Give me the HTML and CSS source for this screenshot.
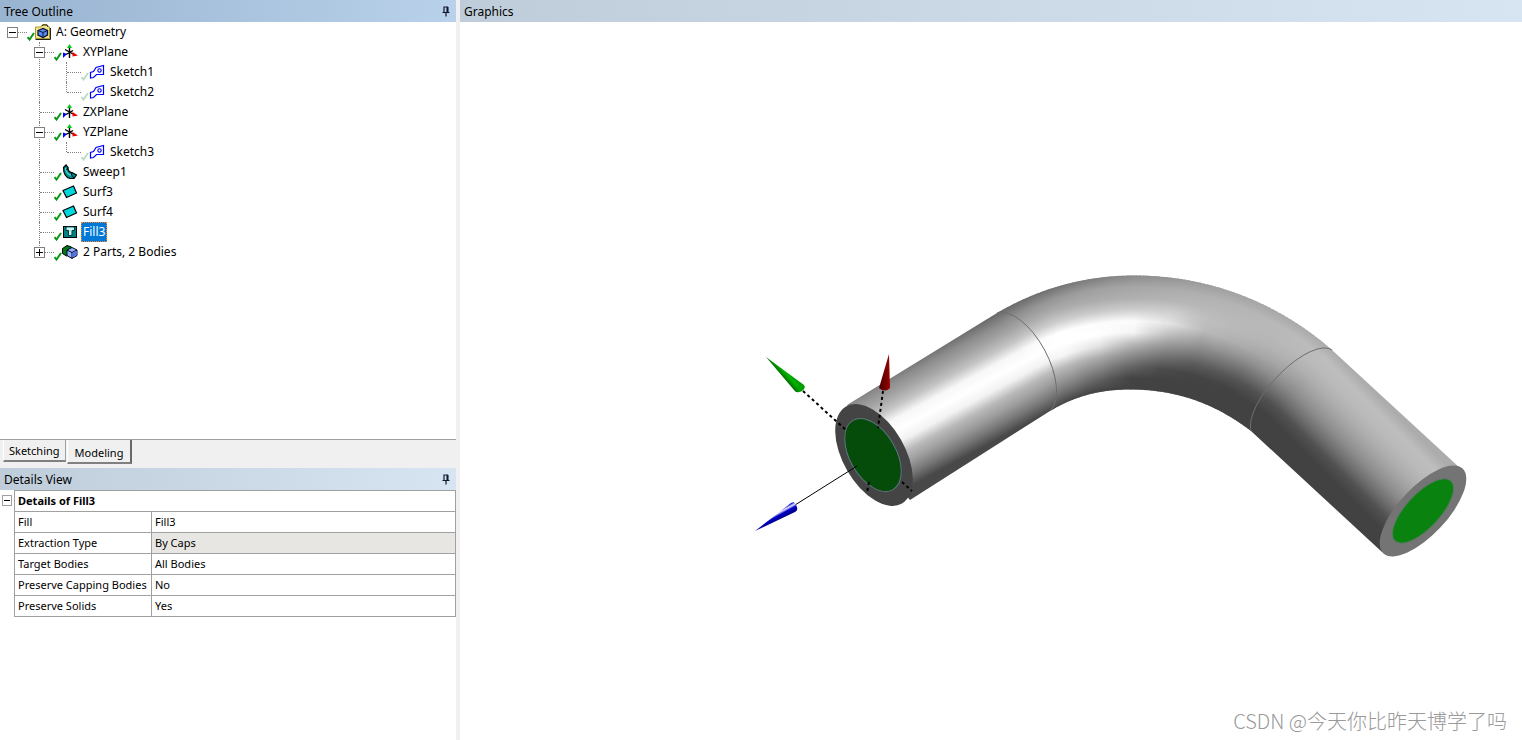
FILE: index.html
```html
<!DOCTYPE html>
<html lang="en">
<head>
    <meta charset="UTF-8">
    <meta name="viewport" content="width=device-width, initial-scale=1.0">
    <title>A: Geometry</title>
    <link rel="stylesheet" href="styles.css">
</head>
<body>
    <!-- shared icons -->
    <svg class="defs" width="0" height="0" aria-hidden="true">
        <symbol id="check" viewBox="0 0 8 9">
            <path d="M0.5 5 L2.5 7.5 L7 1" fill="none" stroke="currentColor" stroke-width="2"/>
        </symbol>
        <symbol id="plane" viewBox="0 0 16 16">
            <path d="M7.500 3 V14 M3 5.500 L11 10 M11 6.500 L4 10.500" stroke="#000" stroke-width="1.400" fill="none"/>
            <path d="M7.500 0 L10 4 H5 Z" fill="#00c814"/>
            <path d="M10.500 8 L16 11.500 L10.500 12.500 Z" fill="#f00000"/>
            <path d="M1 8.500 L5 10 L1 14 Z" fill="#0000f0"/>
        </symbol>
        <symbol id="sketch" viewBox="0 0 16 16">
            <path d="M1.500 14 V8.500 L4.500 7.500 L7 3.500 L14.500 1.500 V10.500 L7.500 10.500 L4.500 13.500 Z" fill="#fff" stroke="#0000f0" stroke-width="1.200"/>
            <circle cx="10.500" cy="6.500" r="1.700" fill="none" stroke="#0000f0" stroke-width="1.100"/>
        </symbol>
        <symbol id="surf" viewBox="0 0 16 16">
            <path d="M1 6.500 L11.500 2 L14.500 9 L4.500 13.500 Z" fill="#00d7dc" stroke="#000" stroke-width="1.200"/>
        </symbol>
        <symbol id="pin" viewBox="0 0 8 11">
            <path d="M2 6 V1 H5.500 V6 M0.500 6.500 H7.500 M4 7 V10.500" fill="none" stroke="#101830" stroke-width="1.200"/>
            <path d="M5.500 1 V6" stroke="#101830" stroke-width="2"/>
        </symbol>
    </svg>

    <div class="app">
        <aside class="sidebar">
            <section class="outline">
                <header class="bar bar-active">
                    <h2>Tree Outline</h2>
                    <button class="pin" aria-label="Pin tree outline"><svg><use href="#pin"/></svg></button>
                </header>
                <ul class="tree">
                    <li>
                        <div class="row">
                            <span class="slot"><button class="toggle open" aria-label="Collapse Geometry"></button></span>
                            <svg class="check"><use href="#check"/></svg>
                            <svg class="icon" viewBox="0 0 16 16">
                                <path d="M0.500 14.500 V3 H6 L7.500 0.500 H12 L13.500 3 H14.500 V14.500 Z" fill="#f5e68c" stroke="#a89a28"/>
                                <path d="M7 2 L8 1 H12 L13 3" fill="none" stroke="#222"/>
                                <path d="M0.500 15.500 H15.500 V4" fill="none" stroke="#222"/>
                                <path d="M3 6.500 L8 4.500 L12.500 6.500 V11 L8 13.500 L3 11 Z" fill="#5a8cf0" stroke="#0a1440" stroke-width="1.300"/>
                                <path d="M3 6.500 L8 8.500 L12.500 6.500 M8 8.500 V13" fill="none" stroke="#0a1440"/>
                            </svg>
                            <span class="name">A: Geometry</span>
                        </div>
                        <ul>
                            <li>
                                <div class="row">
                                    <span class="slot"><button class="toggle open" aria-label="Collapse XYPlane"></button></span>
                                    <svg class="check"><use href="#check"/></svg>
                                    <svg class="icon"><use href="#plane"/></svg>
                                    <span class="name">XYPlane</span>
                                </div>
                                <ul>
                                    <li>
                                        <div class="row">
                                            <span class="slot"></span>
                                            <svg class="check faded"><use href="#check"/></svg>
                                            <svg class="icon"><use href="#sketch"/></svg>
                                            <span class="name">Sketch1</span>
                                        </div>
                                    </li>
                                    <li>
                                        <div class="row">
                                            <span class="slot"></span>
                                            <svg class="check faded"><use href="#check"/></svg>
                                            <svg class="icon"><use href="#sketch"/></svg>
                                            <span class="name">Sketch2</span>
                                        </div>
                                    </li>
                                </ul>
                            </li>
                            <li>
                                <div class="row">
                                    <span class="slot"></span>
                                    <svg class="check"><use href="#check"/></svg>
                                    <svg class="icon"><use href="#plane"/></svg>
                                    <span class="name">ZXPlane</span>
                                </div>
                            </li>
                            <li>
                                <div class="row">
                                    <span class="slot"><button class="toggle open" aria-label="Collapse YZPlane"></button></span>
                                    <svg class="check"><use href="#check"/></svg>
                                    <svg class="icon"><use href="#plane"/></svg>
                                    <span class="name">YZPlane</span>
                                </div>
                                <ul>
                                    <li>
                                        <div class="row">
                                            <span class="slot"></span>
                                            <svg class="check faded"><use href="#check"/></svg>
                                            <svg class="icon"><use href="#sketch"/></svg>
                                            <span class="name">Sketch3</span>
                                        </div>
                                    </li>
                                </ul>
                            </li>
                            <li>
                                <div class="row">
                                    <span class="slot"></span>
                                    <svg class="check"><use href="#check"/></svg>
                                    <svg class="icon" viewBox="0 0 16 16">
                                        <path d="M1.500 3.500 L4 1 L6 3.500 Q6 8.500 10 8.500 L14.500 11 L12 14.500 H8 Q1.500 13 1.500 3.500 Z" fill="#008c8c" stroke="#000" stroke-width="1.200"/>
                                        <path d="M3.500 4 Q4 10 9.500 11.500" fill="none" stroke="#5adcdc" stroke-width="1.200"/>
                                        <path d="M6 3.500 L4.500 6 M10 8.500 L9.500 11 L12 14" fill="none" stroke="#000"/>
                                    </svg>
                                    <span class="name">Sweep1</span>
                                </div>
                            </li>
                            <li>
                                <div class="row">
                                    <span class="slot"></span>
                                    <svg class="check"><use href="#check"/></svg>
                                    <svg class="icon"><use href="#surf"/></svg>
                                    <span class="name">Surf3</span>
                                </div>
                            </li>
                            <li>
                                <div class="row">
                                    <span class="slot"></span>
                                    <svg class="check"><use href="#check"/></svg>
                                    <svg class="icon"><use href="#surf"/></svg>
                                    <span class="name">Surf4</span>
                                </div>
                            </li>
                            <li>
                                <div class="row">
                                    <span class="slot"></span>
                                    <svg class="check"><use href="#check"/></svg>
                                    <svg class="icon" viewBox="0 0 16 16">
                                        <rect x="1.500" y="2.500" width="13" height="11" fill="#008080" stroke="#000"/>
                                        <path d="M4 3 H12.500 V6.500 H10 V11.500 H6.500 V6.500 H4 Z" fill="#b4f0f0" stroke="#003c3c"/>
                                        <path d="M5.500 4 H11.500 M7 5.500 H10 M8 8 V11" stroke="#fff" stroke-dasharray="1 1"/>
                                    </svg>
                                    <span class="name selected">Fill3</span>
                                </div>
                            </li>
                            <li>
                                <div class="row">
                                    <span class="slot"><button class="toggle" aria-label="Expand parts"></button></span>
                                    <svg class="check"><use href="#check"/></svg>
                                    <svg class="icon" viewBox="0 0 16 16">
                                        <path d="M0.500 4.500 L5 1.500 L9.500 3 V10 L4.500 12 L0.500 9.500 Z" fill="#007814" stroke="#000"/>
                                        <path d="M5 6 L10 3.500 L15 6 V11.500 L10 14.500 L5 11.500 Z" fill="#96b4ff" stroke="#000020"/>
                                        <path d="M5 6 L10 8.500 L15 6 M10 8.500 V14" fill="none" stroke="#000020"/>
                                        <path d="M10.500 8.800 L14.500 6.800 V11.200 L10.500 13.500 Z" fill="#5078e6"/>
                                    </svg>
                                    <span class="name">2 Parts, 2 Bodies</span>
                                </div>
                            </li>
                        </ul>
                    </li>
                </ul>
            </section>

            <div class="tabs">
                <button class="tab">Sketching</button>
                <button class="tab active">Modeling</button>
            </div>

            <section class="details">
                <header class="bar">
                    <h2>Details View</h2>
                    <button class="pin" aria-label="Pin details view"><svg><use href="#pin"/></svg></button>
                </header>
                <div class="details-body">
                    <div class="gutter"><button class="toggle open small" aria-label="Collapse details"></button></div>
                    <table class="props">
                        <colgroup>
                            <col class="prop-name">
                            <col>
                        </colgroup>
                        <thead>
                            <tr><th colspan="2">Details of Fill3</th></tr>
                        </thead>
                        <tbody>
                            <tr><td>Fill</td><td>Fill3</td></tr>
                            <tr><td>Extraction Type</td><td class="locked">By Caps</td></tr>
                            <tr><td>Target Bodies</td><td>All Bodies</td></tr>
                            <tr><td>Preserve Capping Bodies</td><td>No</td></tr>
                            <tr><td>Preserve Solids</td><td>Yes</td></tr>
                        </tbody>
                    </table>
                </div>
            </section>
        </aside>

        <main class="graphics">
            <header class="bar">
                <h2>Graphics</h2>
            </header>
            <div class="viewport">
                <svg class="model" viewBox="460 22 1062 718" preserveAspectRatio="xMidYMid meet">
                    <defs>
                        <linearGradient id="leftPipe" gradientUnits="userSpaceOnUse" x1="997" y1="313" x2="1050" y2="411">
                            <stop offset="0" stop-color="#686868"/>
                            <stop offset="0.1" stop-color="#8c8c8c"/>
                            <stop offset="0.2" stop-color="#a5a5a5"/>
                            <stop offset="0.3" stop-color="#c4c4c4"/>
                            <stop offset="0.4" stop-color="#f7f7f7"/>
                            <stop offset="0.5" stop-color="#ffffff"/>
                            <stop offset="0.6" stop-color="#f2f2f2"/>
                            <stop offset="0.7" stop-color="#bababa"/>
                            <stop offset="0.8" stop-color="#9c9c9c"/>
                            <stop offset="0.9" stop-color="#767676"/>
                            <stop offset="1" stop-color="#484848"/>
                        </linearGradient>
                        <linearGradient id="rightPipe" gradientUnits="userSpaceOnUse" x1="1332" y1="350" x2="1251" y2="431">
                            <stop offset="0" stop-color="#acacac"/>
                            <stop offset="0.1" stop-color="#bebebe"/>
                            <stop offset="0.2" stop-color="#bababa"/>
                            <stop offset="0.3" stop-color="#b0b0b0"/>
                            <stop offset="0.4" stop-color="#a0a0a0"/>
                            <stop offset="0.5" stop-color="#8c8c8c"/>
                            <stop offset="0.6" stop-color="#707070"/>
                            <stop offset="0.7" stop-color="#505050"/>
                            <stop offset="0.8" stop-color="#424242"/>
                            <stop offset="1" stop-color="#424242"/>
                        </linearGradient>
                        <linearGradient id="greenCone" gradientUnits="userSpaceOnUse" x1="793" y1="390" x2="802" y2="382">
                            <stop offset="0" stop-color="#006400"/>
                            <stop offset="0.5" stop-color="#00b400"/>
                            <stop offset="1" stop-color="#008c00"/>
                        </linearGradient>
                        <linearGradient id="redCone" gradientUnits="userSpaceOnUse" x1="880" y1="0" x2="890" y2="0">
                            <stop offset="0" stop-color="#500000"/>
                            <stop offset="0.6" stop-color="#780000"/>
                            <stop offset="1" stop-color="#a00000"/>
                        </linearGradient>
                        <linearGradient id="blueCone" gradientUnits="userSpaceOnUse" x1="782" y1="505" x2="788" y2="516">
                            <stop offset="0" stop-color="#0000a0"/>
                            <stop offset="0.25" stop-color="#1414d2"/>
                            <stop offset="0.42" stop-color="#e6e6ff"/>
                            <stop offset="0.6" stop-color="#0000c8"/>
                            <stop offset="1" stop-color="#000078"/>
                        </linearGradient>
                    </defs>

                    <!-- straight runs reach a little under the bend -->
                    <path d="M847 405 L997 313 L1003 311 L1054 408 L1050 411 L910 500 L874 455 Z" fill="url(#leftPipe)"/>
                    <path d="M1328 348 L1332 350 L1460 468 L1423 511 L1382 552 L1251 431 L1248 428 Z" fill="url(#rightPipe)"/>
                    <g id="bend"></g>
                    <path d="M997 313 A56 27 62 0 1 1050 411" fill="none" stroke="#6e6e6e"/>
                    <path d="M1332 350 A58 23 -47 0 0 1251 431" fill="none" stroke="#6e6e6e"/>

                    <!-- pipe ends and fluid caps -->
                    <ellipse cx="874" cy="455" rx="56" ry="31" transform="rotate(60 874 455)" fill="#444444"/>
                    <ellipse cx="873" cy="455" rx="40" ry="23" transform="rotate(60 873 455)" fill="#054b0a" stroke="#5f7482"/>
                    <ellipse cx="1423" cy="511" rx="58" ry="24" transform="rotate(-47 1423 511)" fill="#747474"/>
                    <ellipse cx="1423" cy="511" rx="41" ry="17" transform="rotate(-47 1423 511)" fill="#0a820f" stroke="#5a7864"/>

                    <!-- axes -->
                    <g fill="none" stroke="#000">
                        <path d="M803 391 L846 430 M883 391 L878 428" stroke-width="2" stroke-dasharray="3 3"/>
                        <path d="M869 482 L867 493 M902 482 L912 491" stroke-width="2" stroke-dasharray="3 3"/>
                        <path d="M795 505 L857 466"/>
                    </g>
                    <path d="M766 357 L804 385 Q806 389 799 392 Q796 393 794 390 Z" fill="url(#greenCone)"/>
                    <ellipse cx="801" cy="388" rx="4" ry="3" transform="rotate(-45 801 388)" fill="#00a000"/>
                    <path d="M889 354 L890 388 Q885 393 879 388 Z" fill="url(#redCone)"/>
                    <path d="M755 531 L791 503 Q795 501 796 505 Q799 510 795 512 Z" fill="url(#blueCone)"/>
                </svg>
                <p class="watermark" lang="zh">CSDN @今天你比昨天博学了吗</p>
            </div>
        </main>
    </div>

    <script src="bend.js"></script>
</body>
</html>
```
FILE: styles.css
```css
* {
    box-sizing: border-box;
}
body {
    margin: 0;
    font-family: "Noto Sans", "Open Sans", "Noto Sans CJK SC", sans-serif;
    font-size: 12px;
    color: #000;
    background-color: #f0f0f0;
}
button {
    font: inherit;
    color: inherit;
    padding: 0;
    border: 0;
    background: none;
}
.defs {
    position: absolute;
}
.app {
    display: flex;
    gap: 4px;
    height: 100vh;
}
.sidebar {
    flex: 0 0 456px;
    display: flex;
    flex-direction: column;
}
.graphics {
    flex: 1;
    min-width: 0;
    display: flex;
    flex-direction: column;
}

/* panel title bars */
.bar {
    display: flex;
    align-items: center;
    justify-content: space-between;
    height: 22px;
    padding: 0 6px 0 4px;
    background: linear-gradient(to right, #bfcddb, #d7e4f2);
}
.bar-active {
    background: linear-gradient(to right, #99b4d1, #b9d1ea);
}
.bar h2 {
    margin: 0;
    font-size: 12px;
    font-weight: normal;
}
.pin {
    width: 8px;
    height: 11px;
}
.pin svg {
    display: block;
    width: 8px;
    height: 11px;
}

/* tree */
.outline {
    flex: 1;
    min-height: 0;
    background-color: #fff;
    border-bottom: 1px solid #a0a0a0;
}
.tree, .tree ul {
    list-style: none;
    margin: 0;
    padding: 0;
}
.tree ul {
    margin-left: 27px;
}
.tree li {
    position: relative;
}
.tree ul > li::before {
    content: "";
    position: absolute;
    left: 12px;
    top: 0;
    height: 100%;
    border-left: 1px dotted #808080;
}
.tree ul > li:last-child::before {
    height: 10px;
}
.row {
    display: flex;
    align-items: center;
    height: 20px;
    padding-left: 7px;
}
.slot {
    position: relative;
    width: 20px;
    height: 20px;
    padding-top: 5px;
}
.slot::before {
    content: "";
    position: absolute;
    left: 6px;
    right: 0;
    top: 10px;
    border-top: 1px dotted #808080;
}
.toggle {
    position: relative;
    display: block;
    width: 11px;
    height: 11px;
    border: 1px solid #808080;
    background: linear-gradient(#000, #000) center / 7px 1px no-repeat,
                linear-gradient(#000, #000) center / 1px 7px no-repeat #fff;
}
.toggle.open {
    background: linear-gradient(#000, #000) center / 7px 1px no-repeat #fff;
}
.toggle.small {
    width: 10px;
    border-color: #a0a0a0;
    background-size: 6px 1px;
}
.check {
    width: 8px;
    height: 9px;
    margin-top: 8px;
    color: #0a9614;
}
.check.faded {
    color: #bedcc3;
}
.icon {
    width: 16px;
    height: 16px;
}
.name {
    margin-left: 3px;
    padding: 0 2px;
    line-height: 20px;
}
.name.selected {
    color: #fff;
    background-color: #0078d7;
    outline: 1px dotted #ff8728;
    outline-offset: -1px;
}

/* mode tabs */
.tabs {
    display: flex;
    align-items: flex-start;
    height: 28px;
    padding-left: 3px;
    gap: 1px;
    font-size: 11px;
}
.tab {
    height: 22px;
    padding: 1px 5px 0;
    border-right: 1px solid #a0a0a0;
    border-bottom: 2px solid #808080;
    border-left: 1px solid #fff;
}
.tab.active {
    height: 24px;
    padding: 2px 7px 0;
    border-right: 2px solid #696969;
}

/* details */
.details {
    height: 272px;
    background-color: #fff;
}
.details-body {
    display: flex;
}
.gutter {
    width: 14px;
    padding: 5px 2px;
}
.props {
    flex: 1;
    border-collapse: collapse;
    table-layout: fixed;
    font-size: 11px;
}
.prop-name {
    width: 137px;
}
.props th, .props td {
    height: 21px;
    padding: 0 3px;
    border: 1px solid #a0a0a0;
    line-height: 18px;
    text-align: left;
    white-space: nowrap;
}
.props .locked {
    background-color: #e8e6e2;
}

/* 3D view */
.viewport {
    position: relative;
    flex: 1;
    min-height: 0;
    background-color: #fff;
}
.model {
    display: block;
    width: 100%;
    height: 100%;
}
.watermark {
    position: absolute;
    right: 15px;
    bottom: 5px;
    margin: 0;
    font-family: "Noto Sans CJK SC", sans-serif;
    font-size: 20px;
    font-weight: 300;
    color: #999;
}
```
FILE: bend.js
```js
// Shades the curved part of the pipe as thin slices between its two edges.
var SLICES = 110;
var NS = 'http://www.w3.org/2000/svg';

var upper = [
    [[997, 313], [1040, 288], [1085, 275.5], [1135, 275.5]],
    [[1135, 275.5], [1205, 275.5], [1275, 300], [1332, 350]]
];
var lower = [
    [[1050, 411], [1075, 396], [1100, 389.5], [1130, 389.5]],
    [[1130, 389.5], [1172, 389.5], [1212, 401], [1251, 431]]
];

// grey level across the pipe (upper edge to lower edge) at stations along it
var levels = [
    { at: 0.00, grey: [104, 140, 165, 196, 247, 255, 242, 186, 156, 118, 72] },
    { at: 0.18, grey: [112, 150, 172, 205, 255, 255, 245, 185, 150, 112, 68] },
    { at: 0.35, grey: [125, 160, 172, 202, 252, 255, 225, 170, 130, 92, 66] },
    { at: 0.50, grey: [140, 166, 176, 206, 252, 244, 184, 140, 100, 68, 66] },
    { at: 0.60, grey: [150, 172, 182, 208, 228, 190, 150, 112, 76, 66, 66] },
    { at: 0.70, grey: [160, 178, 184, 190, 186, 158, 126, 92, 68, 66, 66] },
    { at: 0.85, grey: [168, 184, 184, 180, 168, 144, 112, 82, 66, 66, 66] },
    { at: 1.00, grey: [172, 190, 186, 176, 160, 140, 112, 80, 66, 66, 66] }
];

function edgePoint(curve, s) {
    var part = s < 0.5 ? curve[0] : curve[1];
    var t = s < 0.5 ? s * 2 : s * 2 - 1;
    var u = 1 - t;
    return [0, 1].map(function (i) {
        return u * u * u * part[0][i] + 3 * u * u * t * part[1][i] +
            3 * u * t * t * part[2][i] + t * t * t * part[3][i];
    });
}

function greyAt(s, i) {
    var k = 0;
    while (k < levels.length - 2 && levels[k + 1].at < s) {
        k++;
    }
    var a = levels[k], b = levels[k + 1];
    var f = (s - a.at) / (b.at - a.at);
    return Math.round(a.grey[i] + (b.grey[i] - a.grey[i]) * f);
}

function add(parent, tag, attrs) {
    var el = document.createElementNS(NS, tag);
    for (var key in attrs) {
        el.setAttribute(key, attrs[key]);
    }
    parent.appendChild(el);
    return el;
}

var bend = document.getElementById('bend');
for (var n = 0; n < SLICES; n++) {
    var s = n / SLICES;
    // overlap the next slice so no seam shows between them
    var e = Math.min(1, (n + 1.6) / SLICES);
    var a = edgePoint(upper, s), b = edgePoint(upper, e);
    var c = edgePoint(lower, e), d = edgePoint(lower, s);
    var grad = add(bend, 'linearGradient', {
        id: 'slice' + n, gradientUnits: 'userSpaceOnUse',
        x1: a[0], y1: a[1], x2: d[0], y2: d[1]
    });
    for (var i = 0; i <= 10; i++) {
        var g = greyAt(s, i);
        add(grad, 'stop', { offset: i / 10, 'stop-color': 'rgb(' + g + ',' + g + ',' + g + ')' });
    }
    add(bend, 'polygon', { points: [a, b, c, d].join(' '), fill: 'url(#slice' + n + ')' });
}
```
